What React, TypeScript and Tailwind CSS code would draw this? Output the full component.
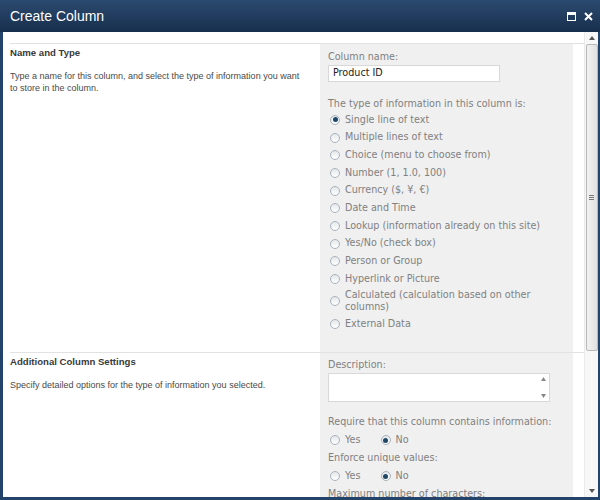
import { ReactNode } from "react";

const Radio = ({ checked }: { checked?: boolean }) => (
  <span className="relative inline-flex w-[10px] h-[10px] shrink-0 rounded-full border border-[#a9b3bd] bg-gradient-to-b from-[#e4e7ea] to-[#ffffff] items-center justify-center">
    {checked && <span className="w-[5px] h-[5px] rounded-full bg-[#1f4868]" />}
  </span>
);

const Option = ({
  label,
  checked,
}: {
  label: ReactNode;
  checked?: boolean;
}) => (
  <div className="flex items-center gap-[5px] h-[17.7px]">
    <Radio checked={checked} />
    <span>{label}</span>
  </div>
);

const types = [
  "Single line of text",
  "Multiple lines of text",
  "Choice (menu to choose from)",
  "Number (1, 1.0, 100)",
  "Currency ($, ¥, €)",
  "Date and Time",
  "Lookup (information already on this site)",
  "Yes/No (check box)",
  "Person or Group",
  "Hyperlink or Picture",
];

const Section = ({
  title,
  text,
  children,
  className,
}: {
  title: string;
  text: ReactNode;
  children: ReactNode;
  className?: string;
}) => (
  <section className={`flex border-t border-[#e2e2e2] ${className ?? ""}`}>
    <div className="w-[310px] pt-[2px] pr-3 font-['Liberation_Sans',sans-serif] text-[9px] text-[#4a4a4a]">
      <h2 className="font-bold text-[9.6px] text-[#3a3a3a] leading-[14px]">
        {title}
      </h2>
      <p className="mt-[10px] leading-[12px]">{text}</p>
    </div>
    <div className="w-[253px] bg-[#f0f0f0] px-[8px] font-['DejaVu_Sans',sans-serif] text-[9.6px] text-[#808080]">
      {children}
    </div>
  </section>
);

export default function App() {
  return (
    <div className="w-[600px] h-[500px] flex flex-col bg-[#24436a] overflow-hidden">
      <header className="h-[32px] shrink-0 flex items-center justify-between pl-[10px] pr-[7px] bg-gradient-to-b from-[#2c4a70] to-[#172f4d]">
        <h1 className="font-['Liberation_Sans',sans-serif] text-[14px] text-white">
          Create Column
        </h1>
        <div className="flex items-center gap-[8px]">
          <span className="w-[9px] h-[9px] border border-white border-t-[3px]" />
          <svg width="9" height="9" viewBox="0 0 9 9">
            <path d="M1 1L8 8M8 1L1 8" stroke="white" strokeWidth="2" />
          </svg>
        </div>
      </header>
      <div className="flex-1 flex ml-[3px] mr-[2px] mb-[3px] bg-white min-h-0">
        <main className="flex-1 pl-[7px] pt-[11px] overflow-hidden">
          <Section
            title="Name and Type"
            text="Type a name for this column, and select the type of information you want to store in the column."
            className="h-[309px]"
          >
            <div className="pt-[7px] leading-[12px]">Column name:</div>
            <div className="mt-[2px] w-[172px] h-[17px] border border-[#d8d8d8] bg-white px-[4px] flex items-center text-[#222]">
              Product ID
            </div>
            <div className="mt-[16px] leading-[12px]">
              The type of information in this column is:
            </div>
            <div className="mt-[1px] pl-[2px]">
              {types.map((t, i) => (
                <Option key={t} label={t} checked={i === 0} />
              ))}
              <div className="flex items-center gap-[5px] py-[1px] leading-[12.5px]">
                <Radio />
                <span>
                  Calculated (calculation based on other
                  <br />
                  columns)
                </span>
              </div>
              <Option label="External Data" />
            </div>
          </Section>
          <Section
            title="Additional Column Settings"
            text="Specify detailed options for the type of information you selected."
          >
            <div className="pt-[6px] leading-[12px]">Description:</div>
            <div className="mt-[2px] w-[222px] h-[29px] border border-[#d8d8d8] bg-white flex justify-end">
              <div className="w-[12px] flex flex-col items-center justify-between py-[3px]">
                <svg width="5" height="4" viewBox="0 0 5 4">
                  <path d="M2.5 0L5 4H0Z" fill="#888" />
                </svg>
                <svg width="5" height="4" viewBox="0 0 5 4">
                  <path d="M0 0H5L2.5 4Z" fill="#888" />
                </svg>
              </div>
            </div>
            <div className="mt-[11px] h-[18px] flex items-center">
              Require that this column contains information:
            </div>
            <div className="flex items-center gap-[20px] pl-[2px] h-[18px]">
              <Option label="Yes" />
              <Option label="No" checked />
            </div>
            <div className="h-[18px] flex items-center">Enforce unique values:</div>
            <div className="flex items-center gap-[20px] pl-[2px] h-[18px]">
              <Option label="Yes" />
              <Option label="No" checked />
            </div>
            <div className="h-[18px] flex items-center">
              Maximum number of characters:
            </div>
          </Section>
        </main>
        <aside className="w-[14px] shrink-0 flex flex-col items-center bg-[#f7f7f7] border-l border-[#eaeaea]">
          <div className="h-[12px] flex items-center">
            <svg width="6" height="4" viewBox="0 0 6 4">
              <path d="M3 0L6 4H0Z" fill="#555" />
            </svg>
          </div>
          <div className="w-[12px] h-[307px] border border-[#b8b8b8] rounded-[2px] bg-gradient-to-r from-[#f2f2f2] to-[#e0e0e0] flex items-center justify-center">
            <div className="flex flex-col gap-[1px]">
              <span className="w-[5px] h-px bg-[#777]" />
              <span className="w-[5px] h-px bg-[#777]" />
              <span className="w-[5px] h-px bg-[#777]" />
            </div>
          </div>
          <div className="flex-1" />
          <div className="h-[12px] flex items-center">
            <svg width="6" height="4" viewBox="0 0 6 4">
              <path d="M0 0H6L3 4Z" fill="#555" />
            </svg>
          </div>
        </aside>
      </div>
    </div>
  );
}
